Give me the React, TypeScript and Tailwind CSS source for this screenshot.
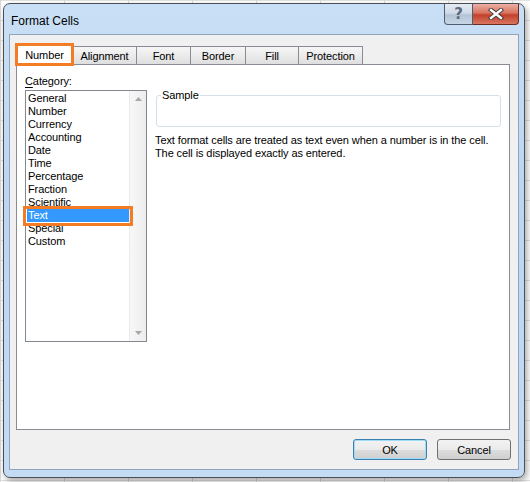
import React from 'react';

const categories = [
  'General',
  'Number',
  'Currency',
  'Accounting',
  'Date',
  'Time',
  'Percentage',
  'Fraction',
  'Scientific',
  'Text',
  'Special',
  'Custom',
];

// widths include the shared 1px border with the neighbour
const tabs = [
  { label: 'Alignment', w: 'w-[65px]' },
  { label: 'Font', w: 'w-[55px]' },
  { label: 'Border', w: 'w-[56px]' },
  { label: 'Fill', w: 'w-[54px]' },
  { label: 'Protection', w: 'w-[65px]' },
];

function CloseGlyph() {
  return (
    <svg width="16" height="12" viewBox="0 0 16 12">
      <path d="M3 2 L13 10 M13 2 L3 10" stroke="#3a3a3a" strokeWidth="4.2" strokeLinecap="square" />
      <path d="M3 2 L13 10 M13 2 L3 10" stroke="#ffffff" strokeWidth="2.4" strokeLinecap="square" />
    </svg>
  );
}

function Triangle({ up }: { up?: boolean }) {
  return (
    <svg width="7" height="4" viewBox="0 0 7 4">
      <path d={up ? 'M0 4 L3.5 0 L7 4 Z' : 'M0 0 L3.5 4 L7 0 Z'} fill="#a7a7a7" />
    </svg>
  );
}

export default function App() {
  return (
    <div
      className="w-[530px] h-[482px] overflow-hidden bg-white bg-[linear-gradient(90deg,#d9d9d9_1px,transparent_1px),linear-gradient(#e2e2e2_1px,transparent_1px)] bg-[size:64px_20px] pt-[3px] pl-[3px] text-[11px] tracking-[-0.1px] text-black"
      style={{ fontFamily: '"Liberation Sans", Arial, sans-serif' }}
    >
      {/* Window */}
      <div className="w-[522px] h-[475px] rounded-[7px] border border-[#4a4f57] bg-[linear-gradient(180deg,#c9dff5_0%,#bcd6f0_40%,#c3dbf3_100%)] shadow-[2px_3px_6px_rgba(0,0,0,0.35)] flex flex-col">
        {/* Title bar */}
        <div className="h-[30px] flex items-start">
          <div className="pl-[7px] pt-[10px] text-[12px] tracking-normal leading-[14px] text-black">Format Cells</div>
          <div className="ml-auto mr-[5px] flex">
            <div className="w-[29px] h-[21px] rounded-bl-[4px] border border-t-0 border-[#4f5d70] bg-[linear-gradient(180deg,#e4ebf3_0%,#cfdbe8_45%,#b3c4d7_55%,#c7d6e6_100%)] flex items-center justify-center">
              <span className="text-[15px] leading-[15px] font-bold text-[#5e6a78]" style={{ fontFamily: '"DejaVu Sans", sans-serif' }}>?</span>
            </div>
            <div className="w-[46px] h-[21px] rounded-br-[4px] border border-l-0 border-t-0 border-[#6b2a22] bg-[linear-gradient(180deg,#eab0a3_0%,#d9735f_45%,#c2402a_55%,#d8755f_100%)] flex items-center justify-center">
              <CloseGlyph />
            </div>
          </div>
        </div>

        {/* Client area */}
        <div className="mx-[5px] mb-[7px] flex-1 border border-[#8ea5bd] bg-[#f0f0f0] flex flex-col">
          <div className="pl-[6px] pr-[2px] pt-[8px] flex-1 flex flex-col">
            {/* Tabs */}
            <div className="flex items-end h-[21px] relative z-10">
              <div className="relative w-[57px] h-[21px] bg-white border border-b-0 border-[#898c95] flex items-center justify-center -mb-[1px]">
                <span className="leading-[14px]">Number</span>
                <span className="absolute -left-[2px] -right-[2px] -top-[2px] -bottom-[1px] border-[3px] border-[#f47c24]" />
              </div>
              {tabs.map(t => (
                <div
                  key={t.label}
                  className={`${t.w} h-[18px] -ml-px first:ml-0 border border-b-0 border-[#898c95] bg-[linear-gradient(180deg,#f6f6f6_0%,#ebebeb_50%,#dedede_100%)] flex items-center justify-center`}
                >
                  <span className="leading-[14px]">{t.label}</span>
                </div>
              ))}
            </div>

            {/* Panel */}
            <div className="mr-[6px] h-[366px] bg-white border border-[#898c95] flex pl-[8px] pr-[8px] pt-[9px]">
              {/* Category */}
              <div className="w-[122px] shrink-0 flex flex-col">
                <div className="leading-[14px] h-[16px]">
                  <span className="underline underline-offset-[2px]">C</span>ategory:
                </div>
                <div className="h-[252px] border border-[#828790] flex">
                  <div className="flex-1 pt-[1px] pl-[1px]">
                    {categories.map(c =>
                      c === 'Text' ? (
                        <div key={c} className="relative h-[13px] leading-[13px] bg-[#3399ff] text-white pl-[1px]">
                          {c}
                          <span className="absolute -left-[4px] -right-[4px] -top-[3px] -bottom-[4px] border-[3px] border-[#f47c24]" />
                        </div>
                      ) : (
                        <div key={c} className="h-[13px] leading-[13px] pl-[1px]">
                          {c}
                        </div>
                      )
                    )}
                  </div>
                  <div className="w-[17px] bg-[linear-gradient(90deg,#f7f7f7,#ededed)] border-l border-[#e9e9e9] flex flex-col justify-between items-center py-[6px]">
                    <Triangle up />
                    <Triangle />
                  </div>
                </div>
              </div>

              {/* Right side */}
              <div className="flex-1 min-w-0 ml-[9px]">
                <div className="relative mt-[21px] h-[32px] rounded-[3px] border border-[#d5dfe5]">
                  <span className="absolute left-[4px] -top-[8px] bg-white px-[1px] leading-[14px]">Sample</span>
                </div>
                <div className="mt-[7px] -ml-px leading-[13px] whitespace-nowrap">
                  <div>Text format cells are treated as text even when a number is in the cell.</div>
                  <div>The cell is displayed exactly as entered.</div>
                </div>
              </div>
            </div>

            {/* Buttons */}
            <div className="flex justify-end gap-[10px] pt-[9px] pr-[5px]">
              <button className="w-[74px] h-[21px] rounded-[3px] border border-[#3c7fb1] bg-[linear-gradient(180deg,#f2f2f2_0%,#ebebeb_50%,#dddddd_51%,#cfcfcf_100%)] shadow-[inset_0_0_0_1px_#9fdcf7] leading-[14px]">
                OK
              </button>
              <button className="w-[74px] h-[21px] rounded-[3px] border border-[#707070] bg-[linear-gradient(180deg,#f2f2f2_0%,#ebebeb_50%,#dddddd_51%,#cfcfcf_100%)] leading-[14px]">
                Cancel
              </button>
            </div>
          </div>
        </div>
      </div>
    </div>
  );
}
